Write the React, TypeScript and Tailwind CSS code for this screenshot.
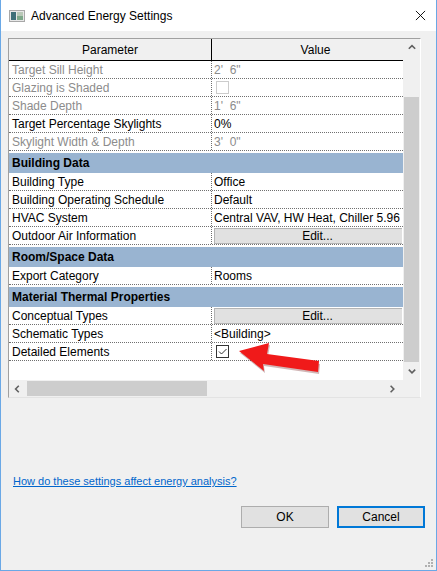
import React from "react";

type Row =
  | { kind: "section"; label: string }
  | { kind: "row"; label: string; value?: string; dim?: boolean; edit?: boolean; check?: "off" | "on" };

const rows: Row[] = [
  { kind: "row", label: "Target Sill Height", value: "2'  6\"", dim: true },
  { kind: "row", label: "Glazing is Shaded", check: "off", dim: true },
  { kind: "row", label: "Shade Depth", value: "1'  6\"", dim: true },
  { kind: "row", label: "Target Percentage Skylights", value: "0%" },
  { kind: "row", label: "Skylight Width & Depth", value: "3'  0\"", dim: true },
  { kind: "section", label: "Building Data" },
  { kind: "row", label: "Building Type", value: "Office" },
  { kind: "row", label: "Building Operating Schedule", value: "Default" },
  { kind: "row", label: "HVAC System", value: "Central VAV, HW Heat, Chiller 5.96 C" },
  { kind: "row", label: "Outdoor Air Information", edit: true },
  { kind: "section", label: "Room/Space Data" },
  { kind: "row", label: "Export Category", value: "Rooms" },
  { kind: "section", label: "Material Thermal Properties" },
  { kind: "row", label: "Conceptual Types", edit: true },
  { kind: "row", label: "Schematic Types", value: "<Building>" },
  { kind: "row", label: "Detailed Elements", check: "on" },
];

function Chevron({ dir }: { dir: "up" | "down" | "left" | "right" }) {
  const d = {
    up: "M1 6 5 2 9 6",
    down: "M1 2 5 6 9 2",
    left: "M6 1 2 5 6 9",
    right: "M2 1 6 5 2 9",
  }[dir];
  return (
    <svg viewBox="0 0 10 10" className="h-[8px] w-[8px]" fill="none" stroke="#606060" strokeWidth="2">
      <path d={d} />
    </svg>
  );
}

function GridRow({ row }: { row: Row }) {
  if (row.kind === "section") {
    return (
      <div className="pt-[2px]">
        <div className="flex h-[20px] items-center bg-[#99b4d1] pl-[3px] font-bold text-black">{row.label}</div>
      </div>
    );
  }
  const tone = row.dim ? "text-[#8c8c8c]" : "text-black";
  return (
    <div className="flex h-[18px] border-b border-dotted border-[#707070]">
      <div className={`flex w-[203px] shrink-0 items-center border-r border-dotted border-[#707070] pl-[3px] ${tone}`}>
        {row.label}
      </div>
      <div className={`flex w-[190px] shrink-0 items-center overflow-hidden whitespace-pre pl-[2px] ${tone}`}>
        {row.value}
        {row.check === "off" && <span className="ml-[2px] h-[13px] w-[13px] border border-[#cccccc] bg-white" />}
        {row.check === "on" && (
          <span className="ml-[2px] flex h-[13px] w-[13px] items-center justify-center border border-[#333333] bg-white">
            <svg viewBox="0 0 11 11" className="h-[11px] w-[11px]" fill="none" stroke="#333333" strokeWidth="1">
              <path d="M2 5.5 4.5 8 9.5 3" />
            </svg>
          </span>
        )}
        {row.edit && (
          <span className="flex h-[16px] w-[207px] shrink-0 items-center justify-center border border-[#b4b4b4] bg-[#e1e1e1] text-black">
            Edit...
          </span>
        )}
      </div>
    </div>
  );
}

export default function App() {
  return (
    <div
      className="relative flex h-[571px] w-[437px] flex-col overflow-hidden border-x border-b border-[#6aa8e6] bg-[#f0f0f0] text-[12px] leading-none text-black"
      style={{ fontFamily: '"Liberation Sans", Arial, sans-serif' }}
    >
      <div className="flex h-[31px] shrink-0 items-center bg-white pl-[8px] pr-[10px]">
        <svg viewBox="0 0 16 12" className="h-[12px] w-[16px]">
          <rect x="0.5" y="0.5" width="15" height="11" fill="#e8e8e8" stroke="#a8a8a8" />
          <rect x="2" y="2" width="5" height="8" fill="#3e6f78" />
          <rect x="8" y="2" width="6" height="8" fill="#b9c9b8" />
          <rect x="8" y="6" width="6" height="4" fill="#7ea88a" />
        </svg>
        <span className="ml-[6px] text-[12px]">Advanced Energy Settings</span>
        <svg viewBox="0 0 12 12" className="ml-auto h-[11px] w-[11px]" fill="none" stroke="#000" strokeWidth="1">
          <path d="M1 1 11 11M11 1 1 11" />
        </svg>
      </div>

      <div className="flex flex-1 flex-col pl-[7px] pr-[11px] pt-[7px]">
        <div className="flex h-[360px] w-[413px] flex-col border-l border-t border-[#a0a0a0] border-b border-b-[#e3e3e3] border-r border-r-white">
          <div className="flex h-[341px]">
            <div className="w-[394px] overflow-hidden bg-white">
              <div className="flex h-[22px] border-b border-black bg-[#f0f0f0]">
                <div className="flex w-[203px] shrink-0 items-center justify-center border-r border-black">Parameter</div>
                <div className="flex w-[207px] shrink-0 items-center justify-center">Value</div>
              </div>
              {rows.map((row, i) => (
                <GridRow key={i} row={row} />
              ))}
            </div>
            <div className="flex w-[17px] flex-col bg-[#f0f0f0]">
              <div className="flex h-[17px] items-center justify-center">
                <Chevron dir="up" />
              </div>
              <div className="mx-[1px] mt-[41px] h-[265px] bg-[#cdcdcd]" />
              <div className="mt-auto flex h-[17px] items-center justify-center">
                <Chevron dir="down" />
              </div>
            </div>
          </div>
          <div className="flex h-[17px] items-center bg-[#f0f0f0]">
            <div className="flex w-[17px] items-center justify-center">
              <Chevron dir="left" />
            </div>
            <div className="ml-[1px] h-[15px] w-[180px] bg-[#cdcdcd]" />
            <div className="ml-auto mr-[19px] flex w-[17px] items-center justify-center">
              <Chevron dir="right" />
            </div>
          </div>
        </div>

        <a className="ml-[5px] mt-[76px] w-fit text-[11px] leading-[14px] text-[#0066cc] underline">
          How do these settings affect energy analysis?
        </a>

        <div className="mt-[18px] flex justify-end gap-[8px]">
          <button className="h-[22px] w-[88px] border border-[#adadad] bg-[#e1e1e1] text-[12px]">OK</button>
          <button className="h-[22px] w-[88px] border-2 border-[#0078d7] bg-[#e1e1e1] text-[12px]">Cancel</button>
        </div>
      </div>

      <svg className="pointer-events-none absolute left-[200px] top-[330px]" width="130" height="50" viewBox="200 330 130 50">
        <polygon
          points="239,353 269,345 267,356 319,364 318,374 263,366 264,373"
          fill="#7a3030"
          opacity="0.35"
        />
        <polygon points="238,351 268,343 266,354 318,361 317,372 262,364 263,371" fill="#f01a1a" />
      </svg>

      <svg className="absolute bottom-[2px] right-[2px]" width="10" height="10" viewBox="0 0 10 10" fill="#b0b0b0">
        <rect x="7" y="1" width="2" height="2" />
        <rect x="4" y="4" width="2" height="2" />
        <rect x="7" y="4" width="2" height="2" />
        <rect x="1" y="7" width="2" height="2" />
        <rect x="4" y="7" width="2" height="2" />
        <rect x="7" y="7" width="2" height="2" />
      </svg>
    </div>
  );
}
